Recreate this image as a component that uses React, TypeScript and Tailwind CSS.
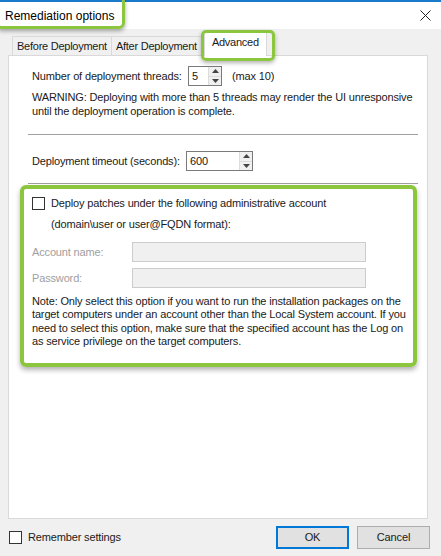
import React from "react";

const Spin = ({ value, width }: { value: string; width: string }) => (
  <div className={`flex h-[20px] ${width} border border-[#7a7a7a] bg-white`}>
    <div className="flex-1 pl-[3px] leading-[18px]">{value}</div>
    <div className="flex w-[13px] flex-col border-l border-[#dcdcdc] bg-[#f0f0f0]">
      <div className="flex flex-1 items-center justify-center border-b border-[#dcdcdc]">
        <svg width="7" height="4" viewBox="0 0 7 4"><path d="M0 4 L3.5 0 L7 4 Z" fill="#444" /></svg>
      </div>
      <div className="flex flex-1 items-center justify-center">
        <svg width="7" height="4" viewBox="0 0 7 4"><path d="M0 0 L3.5 4 L7 0 Z" fill="#444" /></svg>
      </div>
    </div>
  </div>
);

const Check = () => <div className="h-[13px] w-[13px] shrink-0 border border-[#333] bg-white" />;

export default function App() {
  return (
    <div
      className="relative flex h-[556px] w-[441px] flex-col overflow-hidden whitespace-nowrap bg-[#f0f0f0] text-[11px] tracking-[-0.15px] text-[#1a1a1a]"
      style={{ fontFamily: '"Liberation Sans", Arial, sans-serif' }}
    >
      {/* title bar */}
      <div className="flex h-[29px] shrink-0 items-center justify-between border-t-2 border-[#1979ca] bg-white pl-[5px] pr-[10px]">
        <span className="text-[12px] tracking-normal text-black">Remediation options</span>
        <svg width="11" height="11" viewBox="0 0 11 11">
          <path d="M0.5 0.5 L10.5 10.5 M10.5 0.5 L0.5 10.5" stroke="#222" strokeWidth="1" />
        </svg>
      </div>
      {/* title highlight */}
      <div className="absolute left-[-4px] top-[-4px] h-[33px] w-[129px] rounded-[6px] border-[3px] border-[#8cc63f] shadow-[0_2px_4px_rgba(0,0,0,0.35)]" />

      {/* tabs */}
      <div className="flex h-[26px] shrink-0 items-end pl-[12px] tracking-[-0.25px]">
        <div className="flex h-[19px] items-center border border-b-0 border-[#d9d9d9] bg-[#f0f0f0] px-[4px]">Before Deployment</div>
        <div className="flex h-[19px] items-center border border-b-0 border-l-0 border-[#d9d9d9] bg-[#f0f0f0] px-[4px]">After Deployment</div>
        <div className="relative mb-[-1px] ml-[2px] flex h-[24px] items-center border border-b-0 border-[#d9d9d9] bg-white px-[7px] pb-[4px]">
          Advanced
          <div className="absolute left-[-4px] top-[-3px] h-[31px] w-[74px] rounded-[5px] border-[3px] border-[#8cc63f] shadow-[0_2px_4px_rgba(0,0,0,0.3)]" />
        </div>
      </div>

      {/* panel */}
      <div className="mx-[8px] flex h-[464px] w-[420px] flex-col border border-[#d9d9d9] bg-white pl-[19px] pr-[9px] pt-[10px]">
        <div className="flex items-center pl-[4px]">
          <span className="w-[156px]">Number of deployment threads:</span>
          <Spin value="5" width="w-[34px]" />
          <span className="ml-[10px]">(max 10)</span>
        </div>
        <div className="mt-[4px] pl-[4px] leading-[14px]">
          WARNING: Deploying with more than 5 threads may render the UI unresponsive
          <br />
          until the deployment operation is complete.
        </div>
        <div className="mt-[16px] h-px bg-[#a0a0a0]" />
        <div className="mt-[16px] flex items-center pl-[4px]">
          <span className="w-[154px]">Deployment timeout (seconds):</span>
          <Spin value="600" width="w-[67px]" />
        </div>
        <div className="mt-[12px] h-px bg-[#a0a0a0]" />

        {/* highlighted group */}
        <div className="ml-[-8px] mr-[1px] mt-[1px] flex h-[182px] flex-col rounded-[6px] border-[4px] border-[#8cc63f] pl-[8px] pt-[6px] shadow-[0_3px_5px_rgba(0,0,0,0.3)]">
          <div className="flex items-center gap-[6px]">
            <Check />
            <span>Deploy patches under the following administrative account</span>
          </div>
          <div className="mt-[4px] pl-[19px]">(domain\user or user@FQDN format):</div>
          <div className="mt-[10px] flex items-center">
            <span className="w-[100px] text-[#a0a0a0]">Account name:</span>
            <div className="h-[20px] w-[234px] border border-[#cccccc] bg-[#f0f0f0]" />
          </div>
          <div className="mt-[6px] flex items-center">
            <span className="w-[100px] text-[#a0a0a0]">Password:</span>
            <div className="h-[20px] w-[234px] border border-[#cccccc] bg-[#f0f0f0]" />
          </div>
          <div className="mt-[7px] leading-[13.3px]">
            Note: Only select this option if you want to run the installation packages on the
            <br />
            target computers under an account other than the Local System account. If you
            <br />
            need to select this option, make sure that the specified account has the Log on
            <br />
            as service privilege on the target computers.
          </div>
        </div>
      </div>

      {/* bottom */}
      <div className="flex flex-1 items-center pl-[9px] pr-[11px]">
        <Check />
        <span className="ml-[6px]">Remember settings</span>
        <div className="ml-auto flex h-[23px] w-[73px] items-center justify-center border-2 border-[#0078d7] bg-[#e1e1e1]">OK</div>
        <div className="ml-[8px] flex h-[23px] w-[73px] items-center justify-center border border-[#adadad] bg-[#e1e1e1]">Cancel</div>
      </div>
    </div>
  );
}
